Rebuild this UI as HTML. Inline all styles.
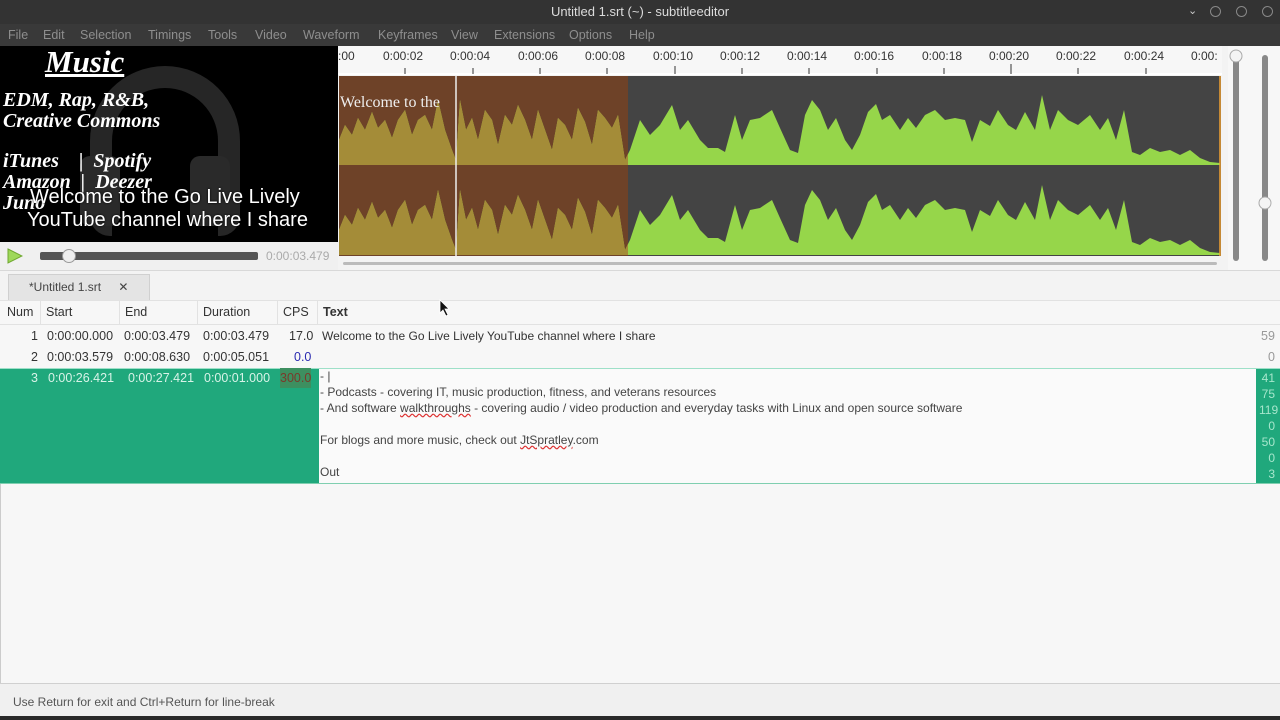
<!DOCTYPE html>
<html><head><meta charset="utf-8"><style>
*{margin:0;padding:0;box-sizing:border-box}
body{width:1280px;height:720px;overflow:hidden;background:#f7f7f7;font-family:"Liberation Sans",sans-serif;position:relative}
.a{position:absolute;white-space:nowrap}
.title{left:0;top:0;width:1280px;height:24px;background:#333;color:#dcdcdc;font-size:13px;text-align:center;line-height:24px}
.menu{left:0;top:24px;width:1280px;height:22px;background:#393939;color:#8e8e8e;font-size:12.5px;line-height:22px}
.menu span{position:absolute}
.vid{left:0;top:46px;width:338px;height:196px;background:#000;overflow:hidden}
.ser{font-family:"Liberation Serif",serif;font-weight:bold;font-style:italic;color:#fff}
.sub{color:#fff;font-size:20px;font-family:"Liberation Sans",sans-serif;text-shadow:0 0 2px #000}
.tbl{font-size:12.5px;color:#333}
</style></head><body>
<div class="a title">Untitled 1.srt (~) - subtitleeditor</div>
<div class="a" style="left:1188px;top:4px;color:#ccc;font-size:11px">⌄</div>
<div class="a" style="left:1210px;top:6px;width:11px;height:11px;border:1.5px solid #888;border-radius:50%"></div>
<div class="a" style="left:1236px;top:6px;width:11px;height:11px;border:1.5px solid #888;border-radius:50%"></div>
<div class="a" style="left:1262px;top:6px;width:11px;height:11px;border:1.5px solid #888;border-radius:50%"></div>
<div class="a menu"><span style="left:8px">File</span><span style="left:43px">Edit</span><span style="left:80px">Selection</span><span style="left:148px">Timings</span><span style="left:208px">Tools</span><span style="left:255px">Video</span><span style="left:303px">Waveform</span><span style="left:378px">Keyframes</span><span style="left:451px">View</span><span style="left:494px">Extensions</span><span style="left:569px">Options</span><span style="left:629px">Help</span></div>

<div class="a vid">
 <div class="a" style="left:90px;top:20px;width:150px;height:170px;border-radius:75px 75px 20px 20px;border:22px solid #262626;border-bottom:none"></div>
 <div class="a" style="left:80px;top:110px;width:40px;height:70px;background:#2a2a2a;border-radius:10px"></div>
 <div class="a" style="left:190px;top:110px;width:40px;height:70px;background:#2a2a2a;border-radius:10px"></div>
 <div class="a ser" style="left:45px;top:-2px;font-size:31px;text-decoration:underline">Music</div>
 <div class="a ser" style="left:3px;top:44px;font-size:20px;line-height:21px">EDM, Rap, R&amp;B,<br>Creative Commons</div>
 <div class="a ser" style="left:3px;top:105px;font-size:20px;line-height:21px">iTunes &nbsp;&nbsp;&nbsp;| &nbsp;Spotify<br>Amazon &nbsp;| &nbsp;Deezer<br>Juno</div>
 <div class="a sub" style="left:30px;top:140px">Welcome to the Go Live Lively</div>
 <div class="a sub" style="left:27px;top:163px">YouTube channel where I share</div>
</div>
<div class="a" style="left:0;top:242px;width:338px;height:28px;background:#f0f0f0"></div>
<svg class="a" style="left:7px;top:248px" width="16" height="16"><path d="M1 1L15 8L1 15Z" fill="#9ed85a" stroke="#6fa830"/></svg>
<div class="a" style="left:40px;top:252px;width:218px;height:8px;background:#555;border-radius:2px"></div>
<div class="a" style="left:62px;top:249px;width:14px;height:14px;background:#eee;border:1px solid #999;border-radius:50%"></div>
<div class="a" style="left:266px;top:249px;font-size:12px;color:#aaa">0:00:03.479</div>

<div class="a" style="left:338px;top:46px;width:890px;height:224px;background:#f3f3f3"></div>
<svg class="a" style="left:338px;top:46px" width="890" height="224">
 <rect x="0" y="0" width="884" height="29" fill="#f7f7f7"/>
 <line x1="0" y1="28" x2="884" y2="28" stroke="#fff" stroke-width="2"/>
 <g font-family="Liberation Sans" font-size="12" fill="#333">
  <text x="0" y="14">:00</text><text x="45" y="14">0:00:02</text><text x="112" y="14">0:00:04</text><text x="180" y="14">0:00:06</text><text x="247" y="14">0:00:08</text><text x="315" y="14">0:00:10</text><text x="382" y="14">0:00:12</text><text x="449" y="14">0:00:14</text><text x="516" y="14">0:00:16</text><text x="584" y="14">0:00:18</text><text x="651" y="14">0:00:20</text><text x="718" y="14">0:00:22</text><text x="786" y="14">0:00:24</text><text x="853" y="14">0:00:</text>
 </g>
</svg>
<svg class="a" style="left:0;top:0" width="1280" height="270">
 <defs>
  <path id="w" d="M339 165L339 140 345 125 352 135 358 118 365 130 372 112 378 128 385 120 392 138 398 120 405 110 412 135 418 120 425 115 432 130 438 100 445 130 452 150 456 160 460 100 466 130 472 118 478 140 485 110 492 120 498 145 505 115 512 125 518 105 525 120 532 140 538 110 545 130 552 150 558 118 565 125 572 140 578 108 585 122 592 145 598 110 605 118 612 128 618 115 625 160 630 150 640 120 650 135 660 125 672 105 680 130 688 120 700 140 708 148 718 148 725 152 735 115 742 140 750 120 760 118 772 110 780 128 790 150 798 153 805 115 812 100 820 110 828 130 836 118 845 140 852 150 860 135 868 112 876 104 882 120 890 115 900 130 908 118 916 128 925 115 935 110 945 120 955 118 965 120 972 142 980 120 990 126 998 110 1008 125 1016 130 1025 112 1035 130 1042 95 1050 130 1058 110 1068 120 1078 125 1090 115 1100 130 1108 118 1116 140 1124 110 1132 152 1140 155 1150 148 1160 152 1170 150 1180 155 1190 150 1200 158 1210 162 1220 163L1220 165Z"/>
  <clipPath id="c"><rect x="339" y="0" width="289" height="270"/></clipPath>
 </defs>
 <g stroke="#333" stroke-width="1"><line x1="405" y1="68" x2="405" y2="74"/><line x1="473" y1="68" x2="473" y2="74"/><line x1="540" y1="68" x2="540" y2="74"/><line x1="607" y1="68" x2="607" y2="74"/><line x1="675" y1="66" x2="675" y2="74"/><line x1="742" y1="68" x2="742" y2="74"/><line x1="809" y1="68" x2="809" y2="74"/><line x1="877" y1="68" x2="877" y2="74"/><line x1="944" y1="68" x2="944" y2="74"/><line x1="1011" y1="64" x2="1011" y2="74"/><line x1="1078" y1="68" x2="1078" y2="74"/><line x1="1146" y1="68" x2="1146" y2="74"/></g>
 <rect x="339" y="76" width="882" height="180" fill="#444"/>
 <rect x="339" y="76" width="289" height="180" fill="#6e4228"/>
 <use href="#w" fill="#96d64a"/>
 <use href="#w" fill="#96d64a" transform="translate(0,90)"/>
 <g clip-path="url(#c)"><use href="#w" fill="#a48c38"/><use href="#w" fill="#a48c38" transform="translate(0,90)"/></g>
 <line x1="456" y1="76" x2="456" y2="256" stroke="#eee" stroke-width="1.5"/>
 <line x1="1220" y1="76" x2="1220" y2="256" stroke="#f0a030" stroke-width="1.5"/>
 <text x="340" y="107" font-family="Liberation Serif" font-size="16" fill="#eee">Welcome to the</text>
 <rect x="343" y="262" width="874" height="3" rx="1.5" fill="#bbb"/>
 <rect x="1233" y="55" width="6" height="206" rx="3" fill="#888"/>
 <circle cx="1236" cy="56" r="6" fill="#f4f4f4" stroke="#aaa"/>
 <rect x="1262" y="55" width="6" height="206" rx="3" fill="#888"/>
 <circle cx="1265" cy="203" r="6" fill="#f4f4f4" stroke="#aaa"/>
</svg>

<div class="a" style="left:0;top:270px;width:1280px;height:30px;background:#f3f3f3;border-top:1px solid #d8d8d8"></div>
<div class="a" style="left:8px;top:274px;width:142px;height:26px;background:#e4e4e4;border:1px solid #d0d0d0;border-bottom:none;font-size:12px;color:#444;line-height:24px;padding-left:20px">*Untitled 1.srt <span style="margin-left:14px">✕</span></div>
<div class="a tbl" style="left:0;top:300px;width:1280px;height:25px;background:#f7f7f7;border-bottom:1px solid #e2e2e2;border-top:1px solid #e2e2e2;line-height:23px">
 <span class="a" style="left:7px">Num</span><span class="a" style="left:46px">Start</span><span class="a" style="left:125px">End</span><span class="a" style="left:203px">Duration</span><span class="a" style="left:283px">CPS</span><span class="a" style="left:323px;font-weight:bold">Text</span>
 <span class="a" style="left:40px;top:0;width:1px;height:23px;background:#e2e2e2"></span><span class="a" style="left:119px;top:0;width:1px;height:23px;background:#e2e2e2"></span><span class="a" style="left:197px;top:0;width:1px;height:23px;background:#e2e2e2"></span><span class="a" style="left:277px;top:0;width:1px;height:23px;background:#e2e2e2"></span><span class="a" style="left:317px;top:0;width:1px;height:23px;background:#e2e2e2"></span>
</div>
<svg class="a" style="left:439px;top:299px" width="12" height="18"><path d="M1 1L1 14 4 11 7 17 9 16 6 10 10 10Z" fill="#111" stroke="#fff" stroke-width="0.8"/></svg>
<div class="a tbl" style="left:0;top:325px;width:1280px;height:22px;line-height:22px">
 <span class="a" style="left:31px">1</span><span class="a" style="left:47px">0:00:00.000</span><span class="a" style="left:124px">0:00:03.479</span><span class="a" style="left:203px">0:00:03.479</span><span class="a" style="left:289px">17.0</span><span class="a" style="left:322px;font-size:12px">Welcome to the Go Live Lively YouTube channel where I share</span><span class="a" style="left:1261px;color:#999">59</span>
</div>
<div class="a tbl" style="left:0;top:346px;width:1280px;height:22px;line-height:22px">
 <span class="a" style="left:31px">2</span><span class="a" style="left:47px">0:00:03.579</span><span class="a" style="left:124px">0:00:08.630</span><span class="a" style="left:203px">0:00:05.051</span><span class="a" style="left:294px;color:#2a2ab0">0.0</span><span class="a" style="left:1268px;color:#999">0</span>
</div>
<div class="a" style="left:0;top:368px;width:1280px;height:116px;background:#20a87c;border-top:1px solid #9ee0c8;border-bottom:1px solid #7fcfb0"></div>
<div class="a tbl" style="left:0;top:368px;line-height:20px;color:#d8f3e8">
 <span class="a" style="left:31px">3</span><span class="a" style="left:48px">0:00:26.421</span><span class="a" style="left:128px">0:00:27.421</span><span class="a" style="left:204px">0:00:01.000</span><span class="a" style="left:280px;color:#7a3a2a;background:#3d8f60">300.0</span>
</div>
<div class="a" style="left:319px;top:369px;width:937px;height:114px;background:#fafafa"></div>
<div class="a" style="left:320px;top:368px;font-size:12px;line-height:16px;color:#444">- |</div>
<div class="a" style="left:320px;top:384px;font-size:12px;line-height:16px;color:#444">- Podcasts - covering IT, music production, fitness, and veterans resources</div>
<div class="a" style="left:320px;top:400px;font-size:12px;line-height:16px;color:#444">- And software <span style="text-decoration:underline wavy #d33">walkthroughs</span> - covering audio / video production and everyday tasks with Linux and open source software</div>
<div class="a" style="left:320px;top:432px;font-size:12px;line-height:16px;color:#444">For blogs and more music, check out <span style="text-decoration:underline wavy #d33">JtSpratley</span>.com</div>
<div class="a" style="left:320px;top:464px;font-size:12px;line-height:16px;color:#444">Out</div>
<div class="a" style="left:1259px;top:370px;font-size:12px;line-height:16px;color:#a6e6cc;text-align:right;width:16px">41<br>75<br>119<br>0<br>50<br>0<br>3</div>
<div class="a" style="left:0;top:484px;width:1px;height:200px;background:#ccc"></div>
<div class="a" style="left:0;top:683px;width:1280px;height:33px;background:#f0f0f0;border-top:1px solid #d0d0d0;font-size:12px;color:#555;line-height:36px;padding-left:13px">Use Return for exit and Ctrl+Return for line-break</div>
<div class="a" style="left:0;top:716px;width:1280px;height:4px;background:#2a2a2a"></div>
</body></html>
